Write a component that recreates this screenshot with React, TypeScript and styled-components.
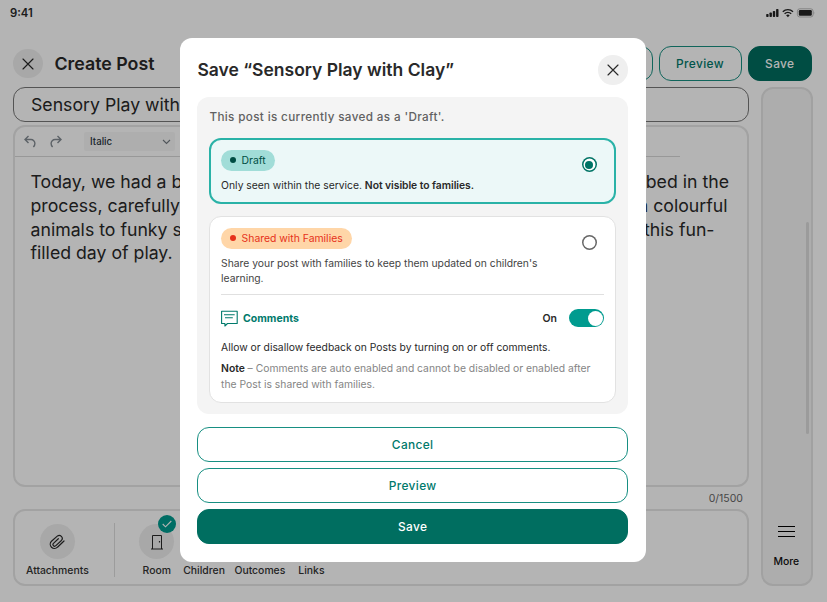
import React from "react";
import styled, { createGlobalStyle } from "styled-components";

const GlobalStyle = createGlobalStyle`
  * { box-sizing: border-box; }
  body { margin: 0; background: #fff; font-family: Inter, "Liberation Sans", sans-serif; color: #292929; overflow: hidden; }
  p, h1, h2 { margin: 0; }
  button { font-family: inherit; margin: 0; padding: 0; border: 0; background: none; }
  svg { display: block; flex: none; }
`;

const Screen = styled.div`
  width: 827px;
  height: 602px;
  display: flex;
  flex-direction: column;
  overflow: hidden;
  background: #fff;
`;

const StatusBar = styled.div`
  height: 26px;
  padding: 0 12px 0 10px;
  display: flex;
  align-items: center;
  justify-content: space-between;
  font-size: 11.3px;
  font-weight: 600;
`;

const Header = styled.header`
  height: 61px;
  padding: 19.5px 15px 5.5px 13px;
  display: flex;
  align-items: center;
`;

const RoundButton = styled.button<{ $size: number }>`
  width: ${(p) => p.$size}px;
  height: ${(p) => p.$size}px;
  flex: none;
  border-radius: 50%;
  background: #efefef;
  display: flex;
  align-items: center;
  justify-content: center;
  position: relative;
`;

const PageTitle = styled.h1`
  margin-left: 12px;
  padding-top: 0.5px;
  flex: 1;
  font-size: 17.8px;
  line-height: 24px;
  font-weight: 600;
`;

const Actions = styled.div`
  display: flex;
  gap: 6px;
`;

const Button = styled.button<{ $solid?: boolean; $width?: string }>`
  width: ${(p) => p.$width ?? "100%"};
  height: 35.5px;
  padding-top: 0.5px;
  border-radius: 12px;
  border: 1px solid ${(p) => (p.$solid ? "#006e60" : "#178f82")};
  background: ${(p) => (p.$solid ? "#006e60" : "transparent")};
  color: ${(p) => (p.$solid ? "#fff" : "#00796b")};
  font-size: 11.9px;
  font-weight: 500;
  letter-spacing: 0.37px;
  line-height: 18px;
`;

const Workspace = styled.div`
  display: flex;
  gap: 12px;
  height: 499px;
  padding: 0 14.5px 0 13px;
`;

const MainColumn = styled.main`
  width: 736px;
  display: flex;
  flex-direction: column;
`;

const TitleField = styled.div`
  height: 35px;
  padding: 0 17px;
  border: 1px solid #777;
  border-radius: 12px;
  font-size: 17.7px;
  line-height: 34.5px;
`;

const Editor = styled.section`
  height: 362px;
  margin-top: 3px;
  border: 2px solid #e6e6e6;
  border-radius: 12px;
`;

const Toolbar = styled.div`
  width: 665px;
  height: 30px;
  padding-left: 8px;
  border-bottom: 1px solid #d8d8d8;
  display: flex;
  align-items: center;
  gap: 12px;
`;

const FontSelect = styled.div`
  margin-left: 9px;
  width: 91px;
  height: 19px;
  padding: 0 4px 0 6px;
  border-radius: 2px;
  background: #f7f7f7;
  display: flex;
  align-items: center;
  justify-content: space-between;
  font-size: 9.7px;
  font-weight: 500;
  color: #27343d;
`;

const Body = styled.div`
  padding: 13.4px 18px 0 15.5px;
`;

const BodyLine = styled.div<{ $end: number }>`
  display: flex;
  justify-content: space-between;
  padding-right: ${(p) => p.$end}px;
  font-size: 17.7px;
  line-height: 23.6px;
  white-space: nowrap;
`;

const Counter = styled.div`
  height: 22px;
  padding-right: 6px;
  text-align: right;
  font-size: 10.5px;
  line-height: 24px;
  color: #666;
`;

const ToolPanel = styled.section`
  height: 77px;
  border: 2px solid #e6e6e6;
  border-radius: 12px;
  display: flex;
  align-items: flex-end;
  padding: 0 0 6px 11px;
`;

const Tool = styled.div<{ $gap?: number }>`
  margin-left: ${(p) => p.$gap ?? 0}px;
  display: flex;
  flex-direction: column;
  align-items: center;
  gap: 5px;
  font-size: 10.4px;
  line-height: 14px;
  font-weight: 500;
  color: #333;
`;

const Divider = styled.div`
  width: 1.5px;
  height: 54px;
  margin: 0 0 1px 25px;
  background: #dedede;
`;

const CheckBadge = styled.span`
  position: absolute;
  top: -9.5px;
  right: -2px;
  width: 18px;
  height: 18px;
  border-radius: 50%;
  background: #009b8e;
  display: flex;
  align-items: center;
  justify-content: center;
`;

const SidePanel = styled.aside`
  width: 51.5px;
  border: 2px solid #e4e4e4;
  border-radius: 12px;
  background: #f5f5f5;
  display: flex;
  flex-direction: column;
  align-items: center;
  font-size: 10.4px;
  font-weight: 500;
  color: #111;
`;

const ScrollThumb = styled.div`
  align-self: flex-end;
  width: 2.5px;
  height: 212px;
  margin: 133px 2px 92px 0;
  border-radius: 2px;
  background: #dcdcdc;
`;

const MoreLabel = styled.span`
  margin: 16px 1px 0 0;
  line-height: 16px;
`;

const Overlay = styled.div`
  position: fixed;
  inset: 0;
  background: rgba(0, 0, 0, 0.295);
`;

const Dialog = styled.div`
  position: absolute;
  left: 180px;
  top: 38px;
  width: 465.5px;
  height: 524px;
  padding: 17px 17.6px 0 17.4px;
  border-radius: 12px;
  background: #fff;
`;

const DialogHead = styled.div`
  display: flex;
  align-items: center;
  justify-content: space-between;
  height: 30px;
`;

const DialogTitle = styled.h2`
  font-size: 17.5px;
  line-height: 24px;
  font-weight: 600;
  white-space: nowrap;
`;

const OptionGroup = styled.div`
  height: 317.5px;
  margin: 11.5px 0 12.5px;
  padding: 12px 12px 0;
  border-radius: 12px;
  background: #f4f4f4;
`;

const Intro = styled.p`
  font-size: 11.7px;
  line-height: 17px;
  letter-spacing: 0.36px;
  font-weight: 500;
  color: #616161;
`;

const OptionCard = styled.div<{ $selected?: boolean; $height: number; $top: number }>`
  height: ${(p) => p.$height}px;
  margin-top: ${(p) => p.$top}px;
  padding: ${(p) => (p.$selected ? "10px 9.7px" : "11px 10.5px 0 10.7px")};
  border: ${(p) => (p.$selected ? "2px solid #2ab2a7" : "1px solid #e2e2e2")};
  border-radius: 12px;
  background: ${(p) => (p.$selected ? "#ecf8f8" : "#fff")};
`;

const OptionHead = styled.div`
  height: 22px;
  display: flex;
  justify-content: space-between;
`;

const Pill = styled.span<{ $tone: "teal" | "orange" }>`
  height: 21.5px;
  padding: 0 9px;
  border-radius: 11px;
  display: flex;
  align-items: center;
  gap: 5.5px;
  font-size: 10.4px;
  background: ${(p) => (p.$tone === "teal" ? "#a1ddd8" : "#ffd6a8")};
  color: ${(p) => (p.$tone === "teal" ? "#004d43" : "#e6311a")};
  &::before {
    content: "";
    width: 6px;
    height: 6px;
    border-radius: 50%;
    background: currentColor;
  }
`;

const RadioDot = styled.span<{ $on?: boolean }>`
  width: 15px;
  height: 15px;
  margin: 7.5px 7.5px 0 0;
  border-radius: 50%;
  box-shadow: inset 0 0 0 1.5px ${(p) => (p.$on ? "#007466" : "#666")};
  display: flex;
  align-items: center;
  justify-content: center;
  background: #fff;
  &::after {
    content: "";
    width: 8px;
    height: 8px;
    border-radius: 50%;
    background: ${(p) => (p.$on ? "#007466" : "transparent")};
  }
`;

const Text = styled.p<{ $muted?: boolean; $top?: number; $soft?: boolean }>`
  margin-top: ${(p) => p.$top ?? 0}px;
  font-size: 10.33px;
  line-height: 15.6px;
  white-space: nowrap;
  color: ${(p) => (p.$muted ? "#858585" : p.$soft ? "#444" : "#292929")};
  strong { font-weight: 600; letter-spacing: -0.04px; color: #292929; }
`;

const Rule = styled.div`
  height: 1px;
  margin-top: 7px;
  background: #e0e0e0;
`;

const CommentsRow = styled.div`
  height: 20px;
  margin-top: 13.5px;
  display: flex;
  align-items: center;
  font-size: 10.5px;
  font-weight: 600;
`;

const CommentsLabel = styled.span`
  margin-left: 5px;
  flex: 1;
  color: #007a6c;
  font-weight: 700;
`;

const Toggle = styled.span`
  width: 35.5px;
  height: 18px;
  margin-left: 12px;
  padding: 1.5px;
  border-radius: 9px;
  display: flex;
  justify-content: flex-end;
  background: #009b8f;
  &::after {
    content: "";
    width: 15px;
    height: 15px;
    border-radius: 50%;
    background: #fff;
  }
`;

const ButtonStack = styled.div`
  display: flex;
  flex-direction: column;
  gap: 5.7px;
`;

const StatusIcons = () => (
  <svg width="50" height="10" viewBox="0 0 50 10">
    <g fill="#222">
      <rect x="1.2" y="6" width="2.4" height="3" rx=".7" />
      <rect x="4.500" y="4.500" width="2.400" height="4.500" rx=".7" />
      <rect x="7.800" y="3" width="2.400" height="6" rx=".7" />
      <rect x="11.100" y="1" width="2.400" height="8" rx=".7" />
      <path d="M22.900 9.200 21.100 7.300a2.600 2.600 0 0 1 3.600 0Z" />
    </g>
    <g fill="none" stroke="#222" strokeWidth="1.4">
      <path d="M17.800 3.700a7.300 7.300 0 0 1 10.200 0" />
      <path d="M19.600 5.800a4.800 4.800 0 0 1 6.600 0" />
    </g>
    <rect x="32.400" y="0.800" width="15.700" height="8.200" rx="2.400" fill="none" stroke="#aaa" strokeWidth=".8" />
    <rect x="33.800" y="2" width="13" height="5.800" rx="1.200" fill="#222" />
    <path d="M48.800 3.500q1.200 1.400 0 2.800Z" fill="#aaa" />
  </svg>
);

const CloseIcon = () => (
  <svg width="12" height="12" viewBox="0 0 12 12" fill="none" stroke="#292929" strokeWidth="1.15" strokeLinecap="round">
    <path d="m1 1 10 10M11 1 1 11" />
  </svg>
);

const UndoIcon = ({ flip = false }: { flip?: boolean }) => (
  <svg width="14" height="14" viewBox="0 0 14 14" fill="none" stroke="#848c93" strokeWidth="1.4">
    <g transform={flip ? "translate(14 0) scale(-1 1)" : undefined}>
      <path d="M5.500 1 2 4.500 5.500 8M2 4.500H8a3.900 3.900 0 0 1 3.900 3.900c0 1.600-.6 2.600-1.500 3.600" />
    </g>
  </svg>
);

const ChevronIcon = () => (
  <svg width="9" height="6" viewBox="0 0 9 6" fill="none" stroke="#737b82" strokeWidth="1.1">
    <path d="m1 1 3.5 3.5L8 1" />
  </svg>
);

const ClipIcon = () => (
  <svg width="16" height="16" viewBox="0 0 24 24" fill="none" stroke="#292929" strokeWidth="1.8" strokeLinecap="round" strokeLinejoin="round">
    <path d="m22.500 10.500-9.800 9.300a6.300 6.300 0 0 1-9-8.900l8.700-7.700a4.500 4.500 0 0 1 6.200 6.500l-8.300 7.800a2.500 2.500 0 0 1-3.600-3.500l7.300-6.900" />
  </svg>
);

const DoorIcon = () => (
  <svg width="14" height="16" viewBox="0 0 14 16" fill="none" stroke="#292929" strokeWidth="1">
    <path d="M2.500 15V1.500h9V15M1 15h12" />
    <path d="M9.500 7v1.500" strokeWidth="1.200" />
  </svg>
);

const CommentIcon = () => (
  <svg width="17" height="17" viewBox="0 0 17 17" fill="none" stroke="#007a6c" strokeWidth="1.100" strokeLinejoin="round">
    <path d="M.6 1.300h15.600v12.200H6.500L3.900 16v-2.500H.6Z" />
    <path d="M3 4.800h10.700M4 7.800h7.800" />
  </svg>
);

const bodyLines = [
  { start: "Today, we had a b", finish: "absorbed in the", end: 0 },
  { start: "process, carefully", finish: "on colourful", end: 1.5 },
  { start: "animals to funky s", finish: "this fun-", end: 14.5 },
  { start: "filled day of play.", finish: "", end: 0 },
];

export default function App() {
  return (
    <>
      <GlobalStyle />
      <Screen>
        <StatusBar>
          <span>9:41</span>
          <StatusIcons />
        </StatusBar>
        <Header>
          <RoundButton $size={29.5} aria-label="Close"><CloseIcon /></RoundButton>
          <PageTitle>Create Post</PageTitle>
          <Actions>
            <Button $width="82px" aria-label="Cancel" />
            <Button $width="83px">Preview</Button>
            <Button $width="64.5px" $solid>Save</Button>
          </Actions>
        </Header>
        <Workspace>
          <MainColumn>
            <TitleField>Sensory Play with Clay</TitleField>
            <Editor>
              <Toolbar>
                <UndoIcon />
                <UndoIcon flip />
                <FontSelect>Italic<ChevronIcon /></FontSelect>
              </Toolbar>
              <Body>
                {bodyLines.map((l) => (
                  <BodyLine key={l.start} $end={l.end}>
                    <span>{l.start}</span>
                    <span>{l.finish}</span>
                  </BodyLine>
                ))}
              </Body>
            </Editor>
            <Counter>0/1500</Counter>
            <ToolPanel>
              <Tool><RoundButton as="span" $size={35}><ClipIcon /></RoundButton>Attachments</Tool>
              <Divider />
              <Tool $gap={24}>
                <RoundButton as="span" $size={35}><DoorIcon /><CheckBadge>
                  <svg width="10" height="8" viewBox="0 0 10 8" fill="none" stroke="#fff" strokeWidth="1.1"><path d="m.7 4 2.800 2.800L9.300 1" /></svg>
                </CheckBadge></RoundButton>
                Room
              </Tool>
              <Tool $gap={9}>Children</Tool>
              <Tool $gap={9.5}>Outcomes</Tool>
              <Tool $gap={13}>Links</Tool>
            </ToolPanel>
          </MainColumn>
          <SidePanel>
            <ScrollThumb />
            <svg width="17" height="12" viewBox="0 0 17 12" stroke="#000" strokeWidth="1"><path d="M0 .5h17M0 5.500h17M0 10.500h17" /></svg>
            <MoreLabel>More</MoreLabel>
          </SidePanel>
        </Workspace>
      </Screen>
      <Overlay>
        <Dialog role="dialog">
          <DialogHead>
            <DialogTitle>Save “Sensory Play with Clay”</DialogTitle>
            <RoundButton $size={29.5} aria-label="Close"><CloseIcon /></RoundButton>
          </DialogHead>
          <OptionGroup>
            <Intro>This post is currently saved as a 'Draft'.</Intro>
            <OptionCard $selected $height={66} $top={12}>
              <OptionHead>
                <Pill $tone="teal">Draft</Pill>
                <RadioDot $on />
              </OptionHead>
              <Text $top={6}>Only seen within the service. <strong>Not visible to families.</strong></Text>
            </OptionCard>
            <OptionCard $height={187} $top={12}>
              <OptionHead>
                <Pill $tone="orange">Shared with Families</Pill>
                <RadioDot />
              </OptionHead>
              <Text $soft $top={6}>Share your post with families to keep them updated on children's<br />learning.</Text>
              <Rule />
              <CommentsRow>
                <CommentIcon />
                <CommentsLabel>Comments</CommentsLabel>
                On
                <Toggle />
              </CommentsRow>
              <Text $top={11.5}>Allow or disallow feedback on Posts by turning on or off comments.</Text>
              <Text $muted $top={6}><strong>Note</strong> – Comments are auto enabled and cannot be disabled or enabled after<br />the Post is shared with families.</Text>
            </OptionCard>
          </OptionGroup>
          <ButtonStack>
            <Button>Cancel</Button>
            <Button>Preview</Button>
            <Button $solid>Save</Button>
          </ButtonStack>
        </Dialog>
      </Overlay>
    </>
  );
}
